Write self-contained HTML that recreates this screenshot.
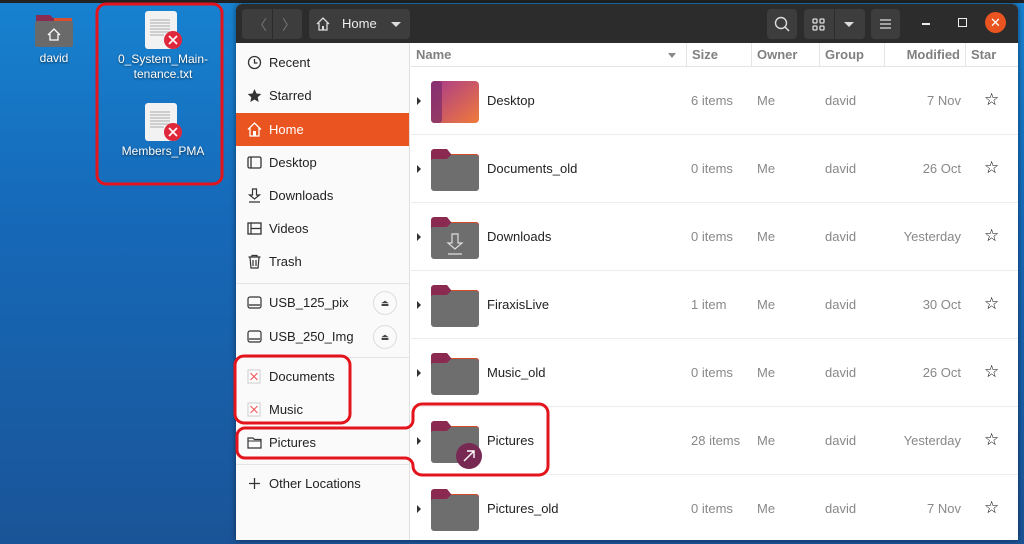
<!DOCTYPE html><html><head><style>
*{margin:0;padding:0;box-sizing:border-box}
body{width:1024px;height:544px;overflow:hidden;position:relative;font-family:"Liberation Sans",sans-serif;background:linear-gradient(180deg,#1782d0 0%,#1669b8 40%,#1a5497 100%)}
.top{position:absolute;left:0;top:0;width:1024px;height:3px;background:#222}
.win{position:absolute;left:236px;top:4px;width:782px;height:536px;background:#fff;box-shadow:0 0 6px rgba(0,0,0,.5);border-radius:6px 6px 0 0;overflow:hidden}
.hb{position:absolute;left:0;top:0;width:782px;height:39px;background:#2c2c2c}
.btn{position:absolute;top:5px;height:30px;background:#3d3d3d;border-radius:4px}
.side{position:absolute;left:0;top:39px;width:174px;height:497px;background:#fafafa;border-right:1px solid #e0e0e0}
.si{position:absolute;left:0;width:173px;height:33px;font-size:13px;color:#222;line-height:33px;padding-left:33px}
.si svg{position:absolute;left:11px;top:9px}
.sep{position:absolute;left:0;width:173px;height:1px;background:#e4e4e4}
.main{position:absolute;left:175px;top:39px;width:607px;height:497px}
.th{position:absolute;top:0;height:24px;font-size:13px;color:#808080;line-height:24px;border-right:1px solid #e5e5e5;padding-left:5px;font-weight:bold}
.row{position:absolute;left:0;width:607px;height:68px;border-bottom:1px solid #ececec;font-size:13px}
.row .n{position:absolute;left:76px;top:26px;color:#222}
.row .c{position:absolute;top:26px;color:#888}
.row .fo{position:absolute;left:19px;top:13px}
.tri{position:absolute;left:6px;top:30px;width:0;height:0;border-left:4px solid #333;border-top:4px solid transparent;border-bottom:4px solid transparent}
.star{position:absolute;left:573px;top:23px;font-size:17px;color:#000}
.dl{position:absolute;color:#fff;font-size:12px;text-align:center;text-shadow:0 1px 2px rgba(0,0,0,.6)}
</style></head><body>
<div class="top"></div>
<svg style="position:absolute;left:34px;top:12px" width="40" height="36"><path d="M2 3h14l3 3h19v4H2z" fill="#8a2c52"/><path d="M20 6h18v4H20z" fill="#d85030"/><rect x="1" y="9" width="38" height="26" rx="2" fill="#6a6a6a"/><path d="M14 23l6-6 6 6M16 22v6h8v-6" stroke="#fff" fill="none" stroke-width="1.3"/></svg>
<div class="dl" style="left:24px;top:51px;width:60px">david</div>
<svg style="position:absolute;left:144px;top:10px" width="40" height="42"><rect x="1" y="1" width="32" height="38" rx="3" fill="#f2f2f2"/><g stroke="#aaa"><path d="M6 10h20M6 13h20M6 16h20M6 19h20M6 22h20M6 25h14"/></g><circle cx="29" cy="30" r="9" fill="#e0283c"/><path d="M25 26l8 8M33 26l-8 8" stroke="#fff" stroke-width="1.6"/></svg>
<div class="dl" style="left:104px;top:52px;width:118px;line-height:15px">0_System_Main-<br>tenance.txt</div>
<svg style="position:absolute;left:144px;top:102px" width="40" height="42"><rect x="1" y="1" width="32" height="38" rx="3" fill="#f2f2f2"/><g stroke="#aaa"><path d="M6 10h20M6 13h20M6 16h20M6 19h20M6 22h20M6 25h14"/></g><circle cx="29" cy="30" r="9" fill="#e0283c"/><path d="M25 26l8 8M33 26l-8 8" stroke="#fff" stroke-width="1.6"/></svg>
<div class="dl" style="left:104px;top:144px;width:118px">Members_PMA</div>

<div class="win">
<div class="hb">
 <div class="btn" style="left:6px;width:60px"><div style="position:absolute;left:30px;top:0;width:1px;height:30px;background:#2c2c2c"></div><span style="position:absolute;left:11px;top:6px;color:#777;font-size:14px">〈</span><span style="position:absolute;left:40px;top:6px;color:#777;font-size:14px">〉</span></div>
 <div class="btn" style="left:73px;width:101px"><svg style="position:absolute;left:7px;top:8px" width="14" height="14"><path d="M1 7l6-6 6 6M3 6v7h8V6" stroke="#ddd" fill="none" stroke-width="1.3"/><rect x="6" y="9" width="2" height="4" fill="#ddd"/></svg><span style="position:absolute;left:33px;top:7px;color:#eee;font-size:13px">Home</span><div style="position:absolute;left:82px;top:13px;border-top:5px solid #ddd;border-left:5px solid transparent;border-right:5px solid transparent"></div></div>
 <div class="btn" style="left:531px;width:30px"><svg style="position:absolute;left:7px;top:7px" width="16" height="16"><circle cx="7" cy="7" r="5.5" stroke="#ddd" fill="none" stroke-width="1.4"/><path d="M11 11l4 4" stroke="#ddd" stroke-width="1.5"/></svg></div>
 <div class="btn" style="left:568px;width:61px"><div style="position:absolute;left:30px;top:0;width:1px;height:30px;background:#2c2c2c"></div><svg style="position:absolute;left:8px;top:9px" width="13" height="13"><g fill="none" stroke="#ddd" stroke-width="1.3"><rect x="1" y="1" width="4" height="4" rx="1"/><rect x="8" y="1" width="4" height="4" rx="1"/><rect x="1" y="8" width="4" height="4" rx="1"/><rect x="8" y="8" width="4" height="4" rx="1"/></g></svg><div style="position:absolute;left:40px;top:13px;border-top:5px solid #ddd;border-left:5px solid transparent;border-right:5px solid transparent"></div></div>
 <div class="btn" style="left:635px;width:29px"><svg style="position:absolute;left:9px;top:10px" width="11" height="10"><path d="M0 1h11M0 5h11M0 9h11" stroke="#ddd" stroke-width="1.2"/></svg></div>
 <div style="position:absolute;left:686px;top:19px;width:8px;height:2px;background:#eee"></div>
 <div style="position:absolute;left:722px;top:14px;width:9px;height:9px;border:1.5px solid #eee"></div>
 <div style="position:absolute;left:749px;top:8px;width:21px;height:21px;border-radius:50%;background:#e95420;color:#fff;text-align:center;line-height:21px;font-size:13px">✕</div>
</div>
<div class="side">
 <div class="si" style="top:3px"><svg width="15" height="15"><circle cx="7.5" cy="7.5" r="6" stroke="#333" fill="none" stroke-width="1.3"/><path d="M7.5 4v4h3" stroke="#333" fill="none" stroke-width="1.3"/></svg>Recent</div>
 <div class="si" style="top:36px"><svg width="15" height="15"><path d="M7.5 1l2 4.5 4.8.5-3.6 3.2 1 4.8-4.2-2.5-4.2 2.5 1-4.8L.7 6l4.8-.5z" fill="#333"/></svg>Starred</div>
 <div class="si" style="top:70px;background:#e95420;color:#fff"><svg width="15" height="15"><path d="M1 7.5l6.5-6.5 6.5 6.5M3 6v8h9V6" stroke="#fff" fill="none" stroke-width="1.3"/><rect x="6" y="9" width="3" height="5" fill="#fff"/></svg>Home</div>
 <div class="si" style="top:103px"><svg width="15" height="15"><rect x="1" y="2" width="13" height="11" rx="1.5" stroke="#333" fill="none" stroke-width="1.3"/><path d="M4 2v11" stroke="#333" stroke-width="1.3"/></svg>Desktop</div>
 <div class="si" style="top:136px"><svg width="15" height="15"><path d="M5.5 1h4v6h3L7.5 11 2.5 7h3zM2 14h11" stroke="#333" fill="none" stroke-width="1.2"/></svg>Downloads</div>
 <div class="si" style="top:169px"><svg width="15" height="15"><rect x="1" y="2" width="13" height="11" stroke="#333" fill="none" stroke-width="1.3"/><path d="M4 2v11M4 7.5h10" stroke="#333" stroke-width="1.2"/></svg>Videos</div>
 <div class="si" style="top:202px"><svg width="15" height="15"><path d="M1.5 3h12M5 3V1.5h5V3M3 3.5l1 10.5h7l1-10.5M6 6v6M9 6v6" stroke="#333" fill="none" stroke-width="1.2"/></svg>Trash</div>
 <div class="sep" style="top:240px"></div>
 <div class="si" style="top:243px"><svg width="15" height="15"><rect x="1" y="2" width="13" height="11" rx="2" stroke="#333" fill="none" stroke-width="1.2"/><path d="M1 10h13" stroke="#777" stroke-width="2"/></svg>USB_125_pix<div style="position:absolute;left:137px;top:5px;width:24px;height:24px;border:1px solid #ddd;border-radius:50%;text-align:center;line-height:22px;font-size:9px;color:#444">⏏</div></div>
 <div class="si" style="top:277px"><svg width="15" height="15"><rect x="1" y="2" width="13" height="11" rx="2" stroke="#333" fill="none" stroke-width="1.2"/><path d="M1 10h13" stroke="#777" stroke-width="2"/></svg>USB_250_Img<div style="position:absolute;left:137px;top:5px;width:24px;height:24px;border:1px solid #ddd;border-radius:50%;text-align:center;line-height:22px;font-size:9px;color:#444">⏏</div></div>
 <div class="sep" style="top:314px"></div>
 <div class="si" style="top:317px"><svg width="15" height="15"><rect x="1" y="1" width="12" height="13" stroke="#ccc" fill="#fff"/><path d="M3.5 4l7 7M10.5 4l-7 7" stroke="#e55" stroke-width="1.1"/></svg>Documents</div>
 <div class="si" style="top:350px"><svg width="15" height="15"><rect x="1" y="1" width="12" height="13" stroke="#ccc" fill="#fff"/><path d="M3.5 4l7 7M10.5 4l-7 7" stroke="#e55" stroke-width="1.1"/></svg>Music</div>
 <div class="si" style="top:383px"><svg width="15" height="15"><path d="M1 3h5l1.5 1.5H14v8.5H1z" stroke="#333" fill="none" stroke-width="1.2"/><path d="M1 6h13" stroke="#333" stroke-width="1"/></svg>Pictures</div>
 <div class="sep" style="top:421px"></div>
 <div class="si" style="top:424px"><svg width="15" height="15"><path d="M7.5 2v11M2 7.5h11" stroke="#333" stroke-width="1.3"/></svg>Other Locations</div>
</div>
<div class="main">
 <div style="position:absolute;left:0;top:0;width:607px;height:24px;border-bottom:1px solid #e5e5e5"></div>
 <div class="th" style="left:0;width:276px">Name<div style="position:absolute;left:257px;top:10px;border-top:5px solid #888;border-left:4px solid transparent;border-right:4px solid transparent"></div></div>
 <div class="th" style="left:276px;width:65px">Size</div>
 <div class="th" style="left:341px;width:68px">Owner</div>
 <div class="th" style="left:409px;width:65px">Group</div>
 <div class="th" style="left:474px;width:81px;text-align:right;padding-right:5px">Modified</div>
 <div class="th" style="left:555px;width:52px;border:none">Star</div>
 <div id="rows"></div>
</div>
</div>
<svg width="1024" height="544" style="position:absolute;left:0;top:0" fill="none" stroke="#e3141c" stroke-width="3">
<rect x="97" y="4" width="125" height="180" rx="9"/>
<rect x="235" y="356" width="115" height="67" rx="9"/>
<path d="M245 428H405a8 8 0 0 0 8-8V413a9 9 0 0 1 9-9H539a9 9 0 0 1 9 9V466a9 9 0 0 1-9 9H422a9 9 0 0 1-9-9V466a8 8 0 0 0-8-8H245a8 8 0 0 1-8-8V436a8 8 0 0 1 8-8z"/>
</svg>
<script>
var d=[["Desktop","6 items","7 Nov",0],["Documents_old","0 items","26 Oct",1],["Downloads","0 items","Yesterday",2],["FiraxisLive","1 item","30 Oct",1],["Music_old","0 items","26 Oct",1],["Pictures","28 items","Yesterday",3],["Pictures_old","0 items","7 Nov",1]];
var h="";
d.forEach(function(r,i){
var f;
if(r[3]==0)f='<svg class="fo" width="50" height="44"><defs><linearGradient id="g" x1="0" x2="1" y1="0" y2="1"><stop offset="0" stop-color="#a83a8c"/><stop offset="1" stop-color="#f07a3a"/></linearGradient></defs><rect x="1" y="1" width="48" height="42" rx="4" fill="url(#g)"/><rect x="1" y="1" width="11" height="42" rx="3" fill="#7a2b6a" opacity=".7"/></svg>';
else{f='<svg class="fo" width="50" height="44"><path d="M1 4a3 3 0 0 1 3-3h13l4 5h25a3 3 0 0 1 3 3v4H1z" fill="#8a2a50"/><path d="M21 6h25a3 3 0 0 1 3 3v3H21z" fill="#d64a2a"/><path d="M1 13a2 2 0 0 1 2-2h14l4-4h25a3 3 0 0 1 3 3v30a3 3 0 0 1-3 3H4a3 3 0 0 1-3-3z" fill="#6e6e6e"/>';
if(r[3]==2)f+='<path d="M22 18h6v9h4l-7 6-7-6h4zM18 38h14" stroke="#ddd" fill="none" stroke-width="1.2"/>';
f+='</svg>';
if(r[3]==3)f+='<svg style="position:absolute;left:44px;top:35px" width="30" height="30"><circle cx="14" cy="14" r="13" fill="#772953"/><path d="M9 19l10-10M12 9h7v7" stroke="#fff" fill="none" stroke-width="1.4"/></svg>';}
h+='<div class="row" style="top:'+(24+i*68)+'px"><div class="tri"></div>'+f+'<div class="n">'+r[0]+'</div><div class="c" style="left:280px">'+r[1]+'</div><div class="c" style="left:346px">Me</div><div class="c" style="left:414px">david</div><div class="c" style="left:474px;width:76px;text-align:right">'+r[2]+'</div><div class="star">☆</div></div>';
});
document.getElementById("rows").innerHTML=h;
</script>
</body></html>
